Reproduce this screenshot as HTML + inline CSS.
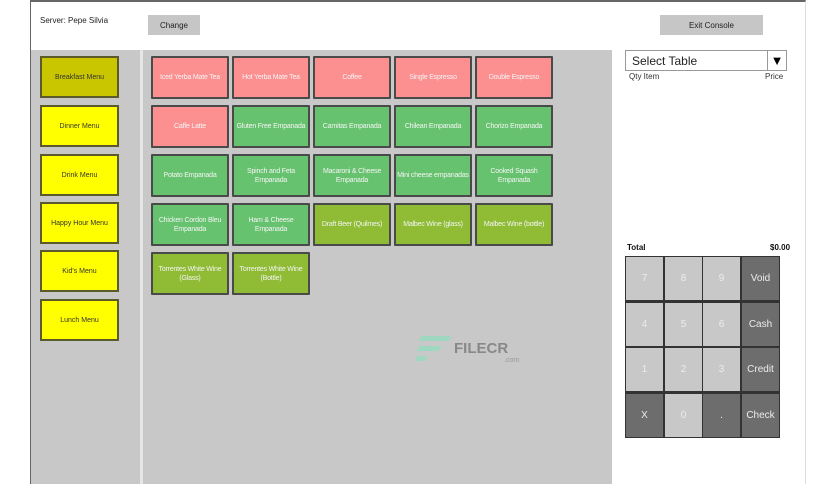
<!DOCTYPE html>
<html><head><meta charset="utf-8"><style>
*{margin:0;padding:0;box-sizing:border-box}
body{width:836px;height:484px;background:#fff;position:relative;overflow:hidden;font-family:"Liberation Sans",sans-serif}
.a{position:absolute}
.t{position:absolute;display:flex;align-items:center;justify-content:center;text-align:center;font-size:7px;line-height:9px;color:#f4f4f4;border:2px solid #4a4a4a;border-radius:1px;width:78px;height:43px;padding:0;letter-spacing:-0.2px;white-space:normal}
.r{background:#fc9090}.g{background:#67c26f}.o{background:#8fbc34}
.m{position:absolute;left:40px;width:79px;height:42px;border:2px solid #5a5a2a;background:#ffff00;display:flex;align-items:center;justify-content:center;font-size:7px;color:#333}
.k{position:absolute;width:39px;height:45px;border:1px solid #333;display:flex;align-items:center;justify-content:center;font-size:10px;color:#ececec;background:#c8c8c8}
.d{background:#6d6d6d}
</style></head><body>
<div class="a" style="left:30px;top:0;width:776px;height:484px;border-left:1px solid #666;border-top:2px solid #666;border-right:1px solid #ddd"></div>
<div class="a" style="left:40px;top:16px;font-size:8px;color:#222">Server: Pepe Silvia</div>
<div class="a" style="left:148px;top:15px;width:52px;height:20px;background:#c6c6c6;font-size:8px;color:#222;display:flex;align-items:center;justify-content:center">Change</div>
<div class="a" style="left:660px;top:15px;width:103px;height:20px;background:#c6c6c6;font-size:8px;color:#222;display:flex;align-items:center;justify-content:center">Exit Console</div>
<div class="a" style="left:31px;top:50px;width:109px;height:434px;background:#c8c8c8"></div>
<div class="a" style="left:140px;top:50px;width:3px;height:434px;background:#e6e6e6"></div>
<div class="a" style="left:143px;top:50px;width:469px;height:434px;background:#c8c8c8"></div>
<div class="m" style="top:56px;background:#c9c600">Breakfast Menu</div>
<div class="m" style="top:105px">Dinner Menu</div>
<div class="m" style="top:154px">Drink Menu</div>
<div class="m" style="top:202px">Happy Hour Menu</div>
<div class="m" style="top:250px">Kid's Menu</div>
<div class="m" style="top:299px">Lunch Menu</div>

<div class="t r" style="left:151px;top:56px">Iced Yerba Mate Tea</div>
<div class="t r" style="left:232px;top:56px">Hot Yerba Mate Tea</div>
<div class="t r" style="left:313px;top:56px">Coffee</div>
<div class="t r" style="left:394px;top:56px">Single Espresso</div>
<div class="t r" style="left:475px;top:56px">Double Espresso</div>
<div class="t r" style="left:151px;top:105px">Caffe Latte</div>
<div class="t g" style="left:232px;top:105px">Gluten Free Empanada</div>
<div class="t g" style="left:313px;top:105px">Carnitas Empanada</div>
<div class="t g" style="left:394px;top:105px">Chilean Empanada</div>
<div class="t g" style="left:475px;top:105px">Chorizo Empanada</div>
<div class="t g" style="left:151px;top:154px">Potato Empanada</div>
<div class="t g" style="left:232px;top:154px">Spinch and Feta<br>Empanada</div>
<div class="t g" style="left:313px;top:154px">Macaroni &amp; Cheese<br>Empanada</div>
<div class="t g" style="left:394px;top:154px">Mini cheese empanadas</div>
<div class="t g" style="left:475px;top:154px">Cooked Squash<br>Empanada</div>
<div class="t g" style="left:151px;top:203px">Chicken Cordon Bleu<br>Empanada</div>
<div class="t g" style="left:232px;top:203px">Ham &amp; Cheese<br>Empanada</div>
<div class="t o" style="left:313px;top:203px">Draft Beer (Quilmes)</div>
<div class="t o" style="left:394px;top:203px">Malbec Wine (glass)</div>
<div class="t o" style="left:475px;top:203px">Malbec Wine (bottle)</div>
<div class="t o" style="left:151px;top:252px">Torrentes White Wine<br>(Glass)</div>
<div class="t o" style="left:232px;top:252px">Torrentes White Wine<br>(Bottle)</div>

<div class="a" style="left:420px;top:336px;width:30px;height:5px;background:#9fd8c0;transform:skewX(-30deg)"></div>
<div class="a" style="left:418px;top:346px;width:22px;height:5px;background:#9fd8c0;transform:skewX(-30deg)"></div>
<div class="a" style="left:416px;top:356px;width:10px;height:5px;background:#9fd8c0;transform:skewX(-30deg)"></div>
<div class="a" style="left:454px;top:340px;font-size:15px;font-weight:bold;color:#888">FILECR</div>
<div class="a" style="left:504px;top:357px;font-size:7px;color:#999">.com</div>

<div class="a" style="left:625px;top:50px;width:162px;height:21px;border:1px solid #999;font-size:12px;color:#222;padding:3px 0 0 6px">Select Table</div>
<div class="a" style="left:767px;top:50px;width:20px;height:21px;border:1px solid #999;font-size:13px;display:flex;align-items:center;justify-content:center">▼</div>
<div class="a" style="left:629px;top:72px;font-size:8px;color:#333">Qty Item</div>
<div class="a" style="left:765px;top:72px;font-size:8px;color:#333">Price</div>
<div class="a" style="left:627px;top:243px;font-size:8px;font-weight:bold;color:#111">Total</div>
<div class="a" style="left:770px;top:243px;font-size:8px;font-weight:bold;color:#111">$0.00</div>

<div class="a" style="left:625px;top:256px;width:155px;height:182px;background:#333"></div>
<div class="k" style="left:625px;top:256px">7</div><div class="k" style="left:664px;top:256px">8</div><div class="k" style="left:702px;top:256px">9</div><div class="k d" style="left:741px;top:256px">Void</div>
<div class="k" style="left:625px;top:302px">4</div><div class="k" style="left:664px;top:302px">5</div><div class="k" style="left:702px;top:302px">6</div><div class="k d" style="left:741px;top:302px">Cash</div>
<div class="k" style="left:625px;top:347px">1</div><div class="k" style="left:664px;top:347px">2</div><div class="k" style="left:702px;top:347px">3</div><div class="k d" style="left:741px;top:347px">Credit</div>
<div class="k d" style="left:625px;top:393px">X</div><div class="k" style="left:664px;top:393px">0</div><div class="k d" style="left:702px;top:393px">.</div><div class="k d" style="left:741px;top:393px">Check</div>
</body></html>
